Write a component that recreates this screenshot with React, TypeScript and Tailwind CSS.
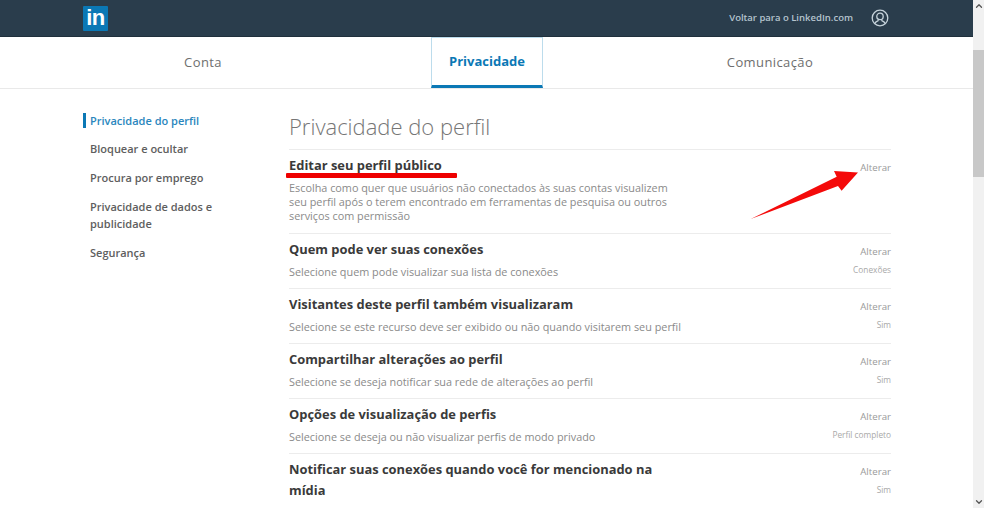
import { ChevronDown, ChevronUp } from "lucide-react";

interface Setting {
  title: string;
  description: string;
  value?: string;
}

const menu = [
  "Bloquear e ocultar",
  "Procura por emprego",
  "Privacidade de dados e publicidade",
  "Segurança",
];

const settings: Setting[] = [
  {
    title: "Quem pode ver suas conexões",
    description: "Selecione quem pode visualizar sua lista de conexões",
    value: "Conexões",
  },
  {
    title: "Visitantes deste perfil também visualizaram",
    description: "Selecione se este recurso deve ser exibido ou não quando visitarem seu perfil",
    value: "Sim",
  },
  {
    title: "Compartilhar alterações ao perfil",
    description: "Selecione se deseja notificar sua rede de alterações ao perfil",
    value: "Sim",
  },
  {
    title: "Opções de visualização de perfis",
    description: "Selecione se deseja ou não visualizar perfis de modo privado",
    value: "Perfil completo",
  },
];

function Side({ value }: { value?: string }) {
  return (
    <div className="flex flex-col items-end text-[8.3px] leading-[12px] text-[#a8a8a8]">
      <span className="mt-[7px] text-[9.7px] text-[#9a9a9a]">Alterar</span>
      {value && <span className="mt-[6px]">{value}</span>}
    </div>
  );
}

export default function App() {
  return (
    <div className="flex h-[508px] w-[984px] overflow-hidden bg-white font-['Open_Sans','Noto_Sans',sans-serif]">
      <div className="relative w-[973px] shrink-0">
        <header className="flex h-[37px] items-center justify-between border-b border-[#20303c] bg-[#2a3d4c] pl-[83px] pr-[84px]">
          <div className="flex h-[25px] w-[25px] items-center justify-center rounded-[1px] bg-[#0b78b5] font-['Liberation_Sans',sans-serif] text-[22px] leading-none font-bold tracking-[-0.5px] text-white">
            in
          </div>
          <div className="flex items-center gap-[18px]">
            <span className="text-[9.5px] font-semibold text-[#b5c4ce]">Voltar para o LinkedIn.com</span>
            <svg width="18" height="18" viewBox="0 0 18 18" fill="none" stroke="#c5d2da" strokeWidth="1.3">
              <circle cx="9" cy="9" r="7.8" />
              <circle cx="9" cy="7.4" r="3.2" />
              <path d="M3.8 14.6c.6-2 2.6-2.6 3.9-3.2M14.2 14.6c-.6-2-2.6-2.6-3.9-3.2" />
            </svg>
          </div>
        </header>

        <nav className="flex h-[52px] border-b border-[#e9e9e9] text-[13px] text-[#6e6e6e]">
          <div className="flex w-[431px] items-center justify-center pr-[25px] tracking-[0.4px]">Conta</div>
          <div className="flex w-[112px] items-center justify-center border-x border-t border-[#bcdcec] border-b-[3px] border-b-[#0b78b5] text-[13px] font-bold text-[#0b78b5]">
            Privacidade
          </div>
          <div className="flex w-[430px] items-center justify-center pl-[24px] tracking-[0.4px]">Comunicação</div>
        </nav>

        <div className="flex pl-[83px]">
          <aside className="w-[206px] shrink-0 pt-[24px] text-[11px] font-semibold text-[#5e5e5e]">
            <div className="mb-[12px] border-l-[3px] border-[#0b78b5] pl-[4px] leading-[15px] text-[#2a86bd]">
              Privacidade do perfil
            </div>
            <ul className="flex flex-col gap-[12px] pl-[7px]">
              {menu.map((item) => (
                <li key={item} className="w-[140px] leading-[17px]">
                  {item}
                </li>
              ))}
            </ul>
          </aside>

          <main className="w-[602px] pt-[23px]">
            <h1 className="h-[38px] border-b border-[#ececec] text-[22px] leading-[28px] font-light text-[#767676]">
              Privacidade do perfil
            </h1>

            <section className="flex h-[84px] justify-between border-b border-[#ececec] pt-[5px]">
              <div>
                <h2 className="text-[12.9px] leading-[21px] font-bold text-[#3a3a3a]">Editar seu perfil público</h2>
                <p className="mt-[5px] w-[385px] text-[10.85px] leading-[14px] text-[#8a8a8a]">
                  Escolha como quer que usuários não conectados às suas contas visualizem seu perfil após o terem
                  encontrado em ferramentas de pesquisa ou outros serviços com permissão
                </p>
              </div>
              <Side />
            </section>

            {settings.map((s) => (
              <section key={s.title} className="flex h-[55px] justify-between border-b border-[#ececec] pt-[5px]">
                <div>
                  <h2 className="text-[12.9px] leading-[21px] font-bold text-[#3a3a3a]">{s.title}</h2>
                  <p className="mt-[5px] text-[10.85px] leading-[14px] text-[#8a8a8a]">{s.description}</p>
                </div>
                <Side value={s.value} />
              </section>
            ))}

            <section className="flex justify-between pt-[5px]">
              <h2 className="w-[400px] text-[12.9px] leading-[21px] font-bold text-[#3a3a3a]">
                Notificar suas conexões quando você for mencionado na mídia
              </h2>
              <Side value="Sim" />
            </section>
          </main>
        </div>

        {/* red marks drawn over the screenshot */}
        <div className="absolute top-[173px] left-[286px] h-[5px] w-[171px] rounded-[1px] bg-[#ee0000]" />
        <svg className="absolute top-[165px] left-[748px]" width="116" height="56" viewBox="0 0 116 56">
          <path d="M2.7 54 L88.7 11.7 L86 6 L110 7.6 L93.6 25.7 L90 21 Z" fill="#f40a0a" />
        </svg>
      </div>

      <div className="flex w-[11px] flex-col items-center justify-between bg-[#f1f1f1] text-[#555]">
        <ChevronUp size={10} strokeWidth={3} className="mt-[1px]" />
        <div className="absolute top-[50px] h-[127px] w-[11px] bg-[#c8c8c8]" />
        <ChevronDown size={10} strokeWidth={3} className="mb-[1px]" />
      </div>
    </div>
  );
}
